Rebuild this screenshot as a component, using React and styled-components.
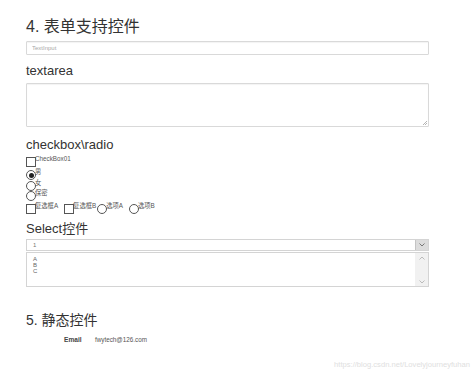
import React from "react";
import styled, { createGlobalStyle } from "styled-components";

const Global = createGlobalStyle`
  html, body { margin: 0; padding: 0; background: #fff; }
  body { font-family: "Liberation Sans", "Noto Sans CJK SC", sans-serif; color: #333; }
  #root { width: 474px; height: 374px; position: relative; overflow: hidden; }
`;

const Page = styled.div`
  display: flex;
  flex-direction: column;
  width: 403px;
  padding: 17px 0 0 26px;
`;

const Heading = styled.h2`
  margin: ${(p) => p.$mt || 0}px 0 0 0;
  font-size: ${(p) => p.$size || 13}px;
  line-height: ${(p) => p.$lh || 17}px;
  font-weight: normal;
  color: #333;
  white-space: nowrap;
`;

const TextInput = styled.input`
  box-sizing: border-box;
  margin-top: 4px;
  width: 403px;
  height: 14px;
  padding: 0 5px;
  border: 1px solid #d9d9d9;
  border-radius: 1px;
  box-shadow: inset 0 1px 1px rgba(0, 0, 0, 0.05);
  font-family: "Liberation Sans", sans-serif;
  font-size: 6px;
  outline: none;
  &::placeholder { color: #a8a8a8; }
`;

const TextArea = styled.textarea`
  box-sizing: border-box;
  display: block;
  margin-top: 4px;
  width: 403px;
  height: 44px;
  border: 1px solid #d9d9d9;
  border-radius: 1px;
  box-shadow: inset 0 1px 1px rgba(0, 0, 0, 0.05);
  resize: none;
  outline: none;
  font-size: 6px;
  background-color: #fff;
  background-image:
    linear-gradient(135deg, transparent 0 62%, #b5b5b5 62% 70%, transparent 70% 80%, #b5b5b5 80% 88%, transparent 88%);
  background-size: 6px 6px;
  background-position: right 1px bottom 1px;
  background-repeat: no-repeat;
`;

const Options = styled.div`
  display: flex;
  flex-direction: column;
  margin-top: 4px;
`;

const Row = styled.div`
  display: flex;
  align-items: flex-start;
  height: 10px;
  margin-bottom: ${(p) => p.$mb || 0}px;
`;

const Option = styled.span`
  display: inline-flex;
  align-items: flex-start;
  margin-right: ${(p) => (p.$mr !== undefined ? p.$mr : 0)}px;
`;

const Box = styled.span`
  box-sizing: border-box;
  flex: none;
  width: 10px;
  height: 10px;
  border: 1px solid #555;
  background: #fff;
`;

const Radio = styled.span`
  box-sizing: border-box;
  flex: none;
  width: 10px;
  height: 10px;
  border: 1px solid #555;
  border-radius: 50%;
  background: #fff;
  display: flex;
  align-items: center;
  justify-content: center;
  &::after {
    content: "";
    width: 5px;
    height: 5px;
    border-radius: 50%;
    background: ${(p) => (p.$checked ? "#222" : "transparent")};
  }
`;

const Label = styled.span`
  font-size: 6.3px;
  line-height: 6px;
  color: #555;
  margin-left: -1px;
  margin-top: -1px;
  white-space: nowrap;
`;

const SelectBox = styled.div`
  box-sizing: border-box;
  display: flex;
  margin-top: 2px;
  width: 403px;
  height: 12px;
  border: 1px solid #d4d4d4;
  background: #fff;
`;

const SelectValue = styled.div`
  flex: 1;
  padding-left: 6px;
  font-size: 6px;
  line-height: 10px;
  color: #777;
`;

const SelectButton = styled.div`
  box-sizing: border-box;
  width: 13px;
  height: 10px;
  background: #dcdcdc;
  border-left: 1px solid #c4c4c4;
  display: flex;
  align-items: center;
  justify-content: center;
`;

const ListBox = styled.div`
  box-sizing: border-box;
  display: flex;
  margin-top: 1px;
  width: 403px;
  height: 35px;
  border: 1px solid #d4d4d4;
  background: #fff;
`;

const ListItems = styled.div`
  flex: 1;
  padding: 3px 0 0 6px;
  display: flex;
  flex-direction: column;
`;

const ListItem = styled.div`
  font-size: 6px;
  line-height: 6px;
  color: #666;
`;

const ScrollTrack = styled.div`
  width: 13px;
  background: #f1f1f1;
  display: flex;
  flex-direction: column;
  justify-content: space-between;
  align-items: center;
  padding: 3px 0 2px;
  box-sizing: border-box;
`;

const StaticRow = styled.div`
  display: flex;
  align-items: center;
  margin-top: 6px;
  padding-left: 38px;
  height: 8px;
`;

const StaticLabel = styled.span`
  font-size: 6.6px;
  font-weight: bold;
  color: #444;
  width: 31px;
`;

const StaticValue = styled.span`
  font-size: 6.3px;
  color: #555;
`;

const Watermark = styled.div`
  position: absolute;
  right: 4px;
  bottom: 5px;
  font-size: 7.6px;
  color: #e0e0e0;
  white-space: nowrap;
`;

const Chevron = ({ up, color = "#888" }) => (
  <svg width="6" height="4" viewBox="0 0 6 4">
    <path
      d={up ? "M0.5 3.5 L3 1 L5.5 3.5" : "M0.5 0.5 L3 3 L5.5 0.5"}
      fill="none"
      stroke={color}
      strokeWidth="1"
    />
  </svg>
);

export default function App() {
  return (
    <>
      <Global />
      <Page>
        <Heading $size={16} $lh={20}>4. 表单支持控件</Heading>
        <TextInput placeholder="TextInput" />
        <Heading $mt={7}>textarea</Heading>
        <TextArea />
        <Heading $mt={9}>checkbox\radio</Heading>
        <Options>
          <Row $mb={3}>
            <Option><Box /><Label>CheckBox01</Label></Option>
          </Row>
          <Row $mb={0.5}>
            <Option><Radio $checked /><Label>男</Label></Option>
          </Row>
          <Row $mb={0.5}>
            <Option><Radio /><Label>女</Label></Option>
          </Row>
          <Row $mb={3}>
            <Option><Radio /><Label>保密</Label></Option>
          </Row>
          <Row>
            <Option $mr={6}><Box /><Label>复选框A</Label></Option>
            <Option $mr={1}><Box /><Label>复选框B</Label></Option>
            <Option $mr={6}><Radio /><Label>选项A</Label></Option>
            <Option><Radio /><Label>选项B</Label></Option>
          </Row>
        </Options>
        <Heading $mt={6}>Select控件</Heading>
        <SelectBox>
          <SelectValue>1</SelectValue>
          <SelectButton><Chevron color="#777" /></SelectButton>
        </SelectBox>
        <ListBox>
          <ListItems>
            <ListItem>A</ListItem>
            <ListItem>B</ListItem>
            <ListItem>C</ListItem>
          </ListItems>
          <ScrollTrack>
            <Chevron up color="#bbb" />
            <Chevron color="#bbb" />
          </ScrollTrack>
        </ListBox>
        <Heading $mt={24} $size={14} $lh={18}>5. 静态控件</Heading>
        <StaticRow>
          <StaticLabel>Email</StaticLabel>
          <StaticValue>fwytech@126.com</StaticValue>
        </StaticRow>
      </Page>
      <Watermark>https://blog.csdn.net/Lovelyjourneyfuhan</Watermark>
    </>
  );
}
